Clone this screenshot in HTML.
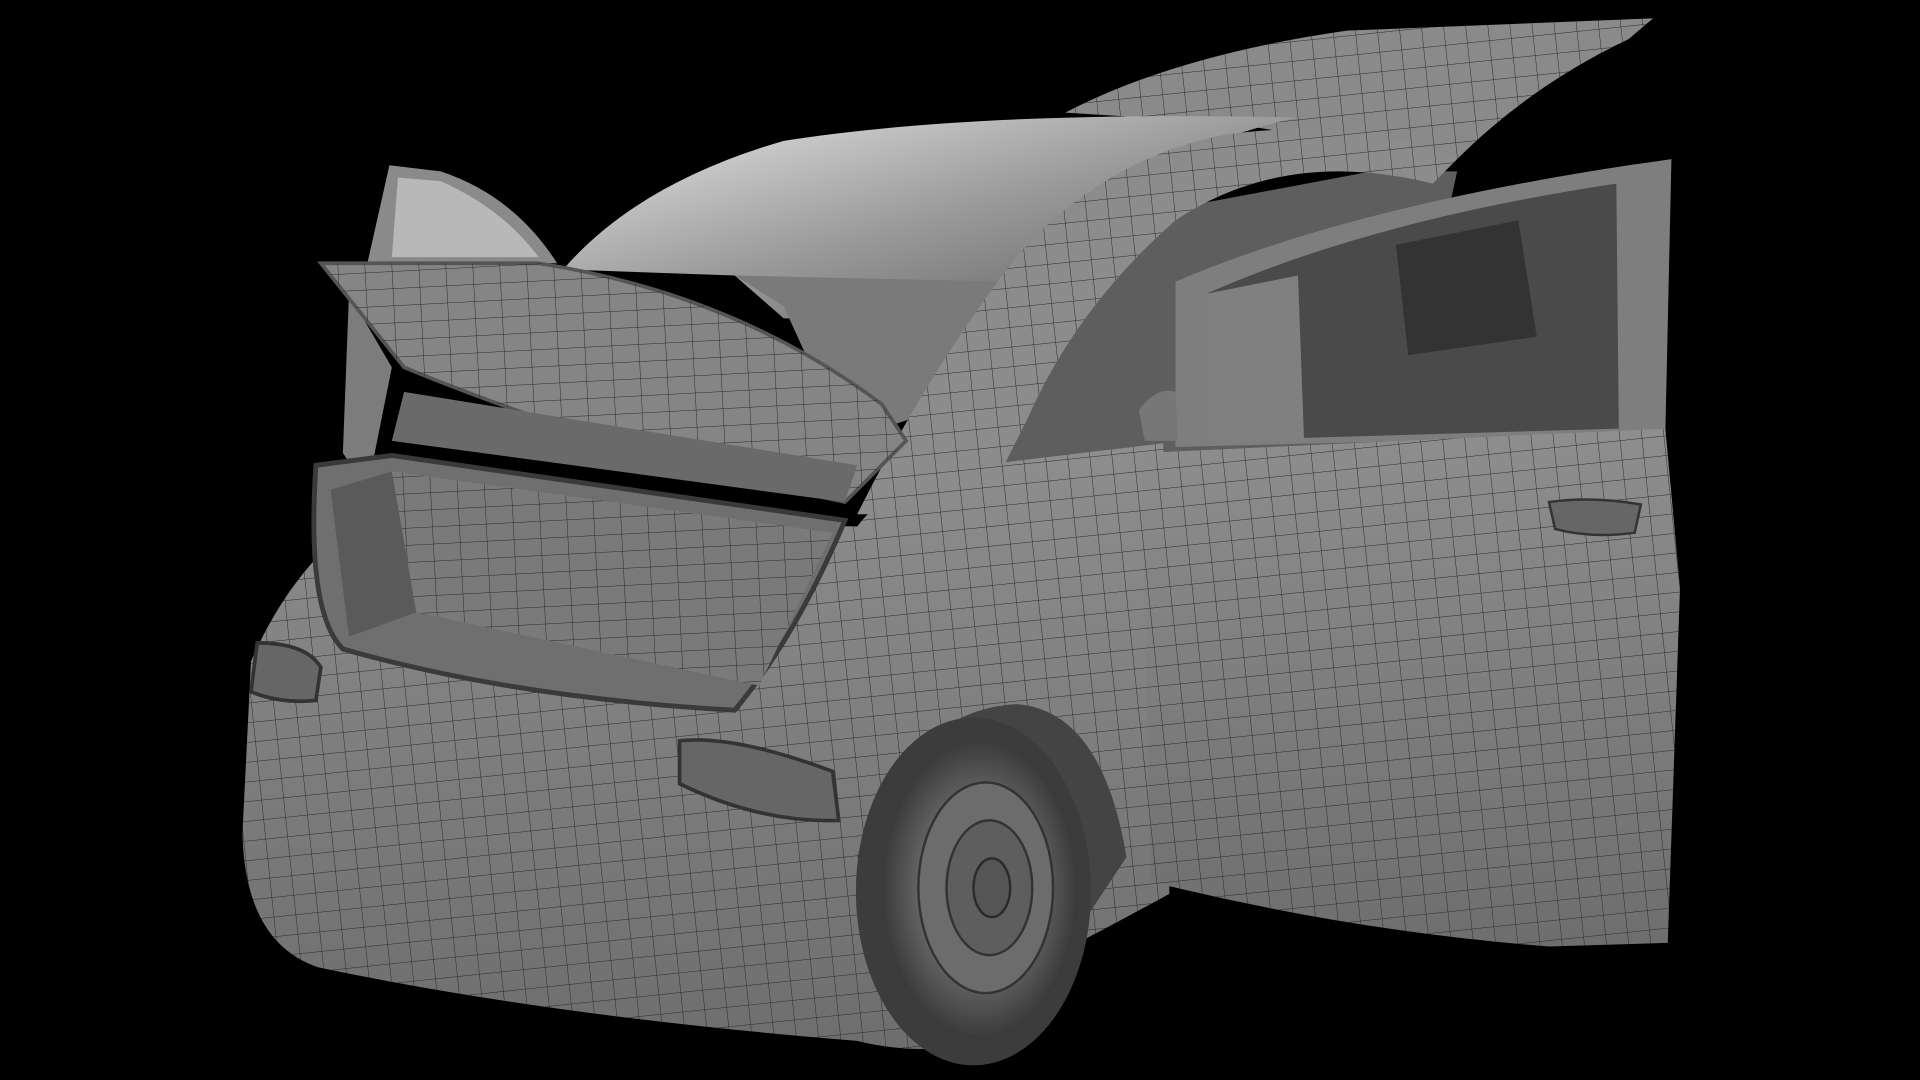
<!DOCTYPE html>
<html><head><meta charset="utf-8"><style>
html,body{margin:0;padding:0;background:#000;width:1920px;height:1080px;overflow:hidden}
svg{display:block}
</style></head><body>
<svg width="1920" height="1080" viewBox="0 0 1568 882" xmlns="http://www.w3.org/2000/svg">
<defs>
<pattern id="g" width="18" height="16" patternUnits="userSpaceOnUse" patternTransform="rotate(-6)">
<path d="M0 0H18M0 0V16" stroke="#2a2a2a" stroke-width="0.8" fill="none"/>
</pattern>
<pattern id="g2" width="22" height="14" patternUnits="userSpaceOnUse" patternTransform="rotate(-3)">
<path d="M0 0H22M0 0V14" stroke="#2a2a2a" stroke-width="0.8" fill="none"/>
</pattern>
<linearGradient id="body" x1="0" y1="0" x2="0" y2="1">
<stop offset="0" stop-color="#8e8e8e"/><stop offset="1" stop-color="#6e6e6e"/></linearGradient>
<linearGradient id="glass" x1="0" y1="0" x2="1" y2="1">
<stop offset="0" stop-color="#e8e8e8"/><stop offset="0.5" stop-color="#9a9a9a"/><stop offset="1" stop-color="#5a5a5a"/></linearGradient>
<radialGradient id="wheel" cx="0.5" cy="0.5" r="0.5">
<stop offset="0" stop-color="#777"/><stop offset="0.6" stop-color="#666"/><stop offset="1" stop-color="#3a3a3a"/></radialGradient>
</defs>
<rect width="1568" height="882" fill="#000"/>
<path d="M870 92 Q960 45 1100 25 L1350 15 L1330 32 Q1250 70 1190 130 L1000 100 Z" fill="#8a8a8a"/>
<path d="M870 92 Q960 45 1100 25 L1350 15 L1330 32 Q1250 70 1190 130 L1000 100 Z" fill="url(#g)"/>
<path d="M300 215 L318 135 L360 140 Q420 160 455 215 Z" fill="#8a8a8a"/>
<path d="M325 145 L360 148 Q410 170 440 210 L320 210 Z" fill="#b8b8b8"/>
<path d="M285 240 L280 370 L300 400 L320 300 Z" fill="#7c7c7c"/>
<path d="M460 220 Q520 150 640 115 Q800 90 1060 96 Q950 120 890 180 L820 260 L640 260 L600 225 Z" fill="url(#glass)"/>
<path d="M600 225 L820 230 L780 330 L690 360 L640 250 Z" fill="#7a7a7a"/>
<!-- interior behind doors -->
<path d="M800 400 Q880 250 960 170 L1120 140 L1190 140 L1140 370 L940 380 Z" fill="#5e5e5e"/>
<path d="M700 420 Q760 300 830 210 Q900 130 1000 110 Q1110 95 1190 130 L1170 150 Q1050 120 960 180 Q880 250 840 340 L800 420 Z" fill="#8c8c8c"/>
<path d="M700 420 Q760 300 830 210 Q900 130 1000 110 Q1110 95 1190 130 L1170 150 Q1050 120 960 180 Q880 250 840 340 L800 420 Z" fill="url(#g)"/>
<path d="M205 540 Q240 460 300 420 L700 430 Q730 390 800 380 L950 362 L955 730 Q900 760 880 770 L860 830 Q780 870 700 850 Q450 830 260 790 Q200 770 198 680 Z" fill="url(#body)"/>
<path d="M205 540 Q240 460 300 420 L700 430 Q730 390 800 380 L950 362 L955 730 Q900 760 880 770 L860 830 Q780 870 700 850 Q450 830 260 790 Q200 770 198 680 Z" fill="url(#g)"/>
<path d="M258 380 L320 372 L690 425 Q650 520 600 580 Q420 570 280 530 Q250 500 258 380 Z" fill="#6f6f6f" stroke="#3a3a3a" stroke-width="4"/>
<path d="M270 400 L320 385 L340 500 L285 520 Z" fill="#5a5a5a"/>
<path d="M320 385 L680 435 L620 560 L340 500 Z" fill="#7a7a7a"/>
<path d="M320 385 L680 435 L620 560 L340 500 Z" fill="url(#g2)"/>
<path d="M262 215 L440 215 Q600 240 720 330 L740 360 L690 410 Q500 370 330 300 Z" fill="#858585" stroke="#555" stroke-width="3"/>
<path d="M262 215 L440 215 Q600 240 720 330 L740 360 L690 410 Q500 370 330 300 Z" fill="url(#g2)"/>
<path d="M330 320 L700 380 L690 410 L320 360 Z" fill="#6a6a6a"/>
<path d="M210 525 Q250 525 262 545 L258 572 Q230 575 205 565 Z" fill="#666" stroke="#333" stroke-width="3"/>
<path d="M555 605 Q600 600 680 630 L685 670 Q620 672 555 640 Z" fill="#666" stroke="#333" stroke-width="3"/>
<path d="M960 230 Q1100 170 1330 135 L1365 130 L1360 355 L960 365 Z" fill="#7e7e7e"/>
<path d="M985 240 Q1120 180 1320 150 L1322 350 L985 360 Z" fill="#4a4a4a"/>
<path d="M1140 200 L1240 180 L1255 275 L1150 290 Z" fill="#333"/>
<path d="M985 240 L1060 225 L1065 360 L985 360 Z" fill="#808080"/>
<path d="M932 370 L1360 350 L1372 480 L1362 770 L1265 773 Q1100 760 940 720 Z" fill="url(#body)"/>
<path d="M932 370 L1360 350 L1372 480 L1362 770 L1265 773 Q1100 760 940 720 Z" fill="url(#g)"/>
<path d="M1265 410 Q1300 405 1340 412 L1335 435 Q1300 440 1270 432 Z" fill="#666" stroke="#333" stroke-width="2"/>
<path d="M930 335 Q945 315 960 320 L962 360 L935 360 Z" fill="#777"/>
<path d="M700 700 Q740 580 830 575 Q900 580 920 700 L880 760 Z" fill="#444"/>
<ellipse cx="795" cy="728" rx="96" ry="142" fill="#3c3c3c"/>
<ellipse cx="800" cy="726" rx="80" ry="122" fill="url(#wheel)"/>
<ellipse cx="805" cy="725" rx="55" ry="86" fill="#6c6c6c" stroke="#333" stroke-width="2"/>
<ellipse cx="808" cy="725" rx="35" ry="55" fill="#5e5e5e" stroke="#333" stroke-width="2"/>
<ellipse cx="810" cy="725" rx="15" ry="24" fill="#555" stroke="#2a2a2a" stroke-width="2"/>
</svg>
</body></html>
